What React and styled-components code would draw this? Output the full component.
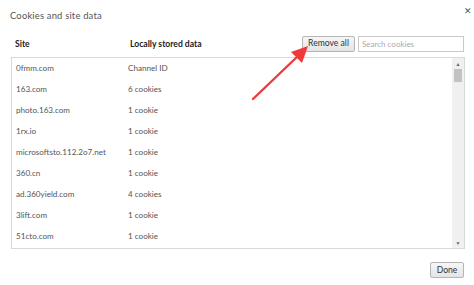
import React from "react";
import styled, { createGlobalStyle } from "styled-components";

const Global = createGlobalStyle`
  html, body {
    margin: 0;
    padding: 0;
    background: #fff;
  }
  body {
    font-family: Lato, "Open Sans", sans-serif;
    color: #333;
  }
`;

const Dialog = styled.div`
  position: relative;
  width: 474px;
  height: 285px;
  box-sizing: border-box;
  padding: 0 9px 0 11px;
  display: flex;
  flex-direction: column;
  overflow: hidden;
`;

const TitleBar = styled.div`
  display: flex;
  justify-content: space-between;
  align-items: center;
  height: 30px;
  margin-left: -1px;
`;

const Title = styled.div`
  font-size: 9.4px;
  color: #555;
  letter-spacing: 0.2px;
`;

const Close = styled.div`
  font-size: 9px;
  color: #555;
  margin-top: -10px;
  margin-right: -7px;
`;

const HeaderRow = styled.div`
  display: flex;
  align-items: center;
  height: 27px;
`;

const ColHead = styled.div`
  font-size: 8.6px;
  font-weight: 700;
  color: #222;
  width: ${(p) => p.w}px;
  padding-left: ${(p) => p.pad || 0}px;
`;

const Tools = styled.div`
  margin-left: auto;
  display: flex;
  gap: 3px;
  margin-right: 1px;
`;

const Button = styled.button`
  font-family: Lato, "Open Sans", sans-serif;
  font-size: 8.6px;
  color: #333;
  height: 16px;
  width: ${(p) => p.w}px;
  padding: 0;
  white-space: nowrap;
  border: 1px solid #b5b5b5;
  border-radius: 2px;
  background: linear-gradient(#f6f6f6, #e4e4e4);
  line-height: 13px;
`;

const Search = styled.div`
  width: 101px;
  height: 14px;
  border: 1px solid #c8c8c8;
  font-size: 8px;
  color: #aaa;
  padding-left: 3px;
  line-height: 14px;
`;

const ListBox = styled.div`
  height: 190px;
  border: 1px solid #d9d9d9;
  display: flex;
`;

const Rows = styled.div`
  flex: 1;
`;

const Row = styled.div`
  display: flex;
  height: 21px;
  box-sizing: border-box;
  padding-bottom: 2px;
  align-items: center;
  font-size: 8.1px;
  color: #555;
`;

const Cell = styled.div`
  width: ${(p) => p.w}px;
  padding-left: ${(p) => p.pad || 0}px;
  white-space: nowrap;
`;

const ScrollBar = styled.div`
  width: 12px;
  background: #f0f0f0;
  display: flex;
  flex-direction: column;
  align-items: center;
`;

const Arrow = styled.div`
  height: 11px;
  display: flex;
  align-items: center;
  justify-content: center;
  color: #666;
  font-size: 5px;
`;

const Thumb = styled.div`
  width: 8px;
  height: 13px;
  background: #c2c2c2;
  margin-bottom: auto;
`;

const Footer = styled.div`
  display: flex;
  justify-content: flex-end;
  padding-top: 13px;
  padding-right: 1px;
`;

const Overlay = styled.svg`
  position: absolute;
  left: 0;
  top: 0;
  pointer-events: none;
`;

const rows = [
  ["0fmm.com", "Channel ID"],
  ["163.com", "6 cookies"],
  ["photo.163.com", "1 cookie"],
  ["1rx.io", "1 cookie"],
  ["microsoftsto.112.2o7.net", "1 cookie"],
  ["360.cn", "1 cookie"],
  ["ad.360yield.com", "4 cookies"],
  ["3lift.com", "1 cookie"],
  ["51cto.com", "1 cookie"],
];

export default function App() {
  return (
    <>
      <Global />
      <Dialog>
        <TitleBar>
          <Title>Cookies and site data</Title>
          <Close>✕</Close>
        </TitleBar>
        <HeaderRow>
          <ColHead w={115} pad={4}>Site</ColHead>
          <ColHead w={160}>Locally stored data</ColHead>
          <Tools>
            <Button w={53}>Remove all</Button>
            <Search>Search cookies</Search>
          </Tools>
        </HeaderRow>
        <ListBox>
          <Rows>
            {rows.map(([site, data]) => (
              <Row key={site}>
                <Cell w={112} pad={4}>{site}</Cell>
                <Cell w={160}>{data}</Cell>
              </Row>
            ))}
          </Rows>
          <ScrollBar>
            <Arrow>▲</Arrow>
            <Thumb />
            <Arrow>▼</Arrow>
          </ScrollBar>
        </ListBox>
        <Footer>
          <Button w={34}>Done</Button>
        </Footer>
        <Overlay width="474" height="285" viewBox="0 0 474 285">
          <line x1="253" y1="99" x2="298" y2="56" stroke="#f0393b" strokeWidth="2.4" strokeLinecap="round" />
          <polygon points="308,46 291,52 302,63" fill="#f0393b" />
        </Overlay>
      </Dialog>
    </>
  );
}
